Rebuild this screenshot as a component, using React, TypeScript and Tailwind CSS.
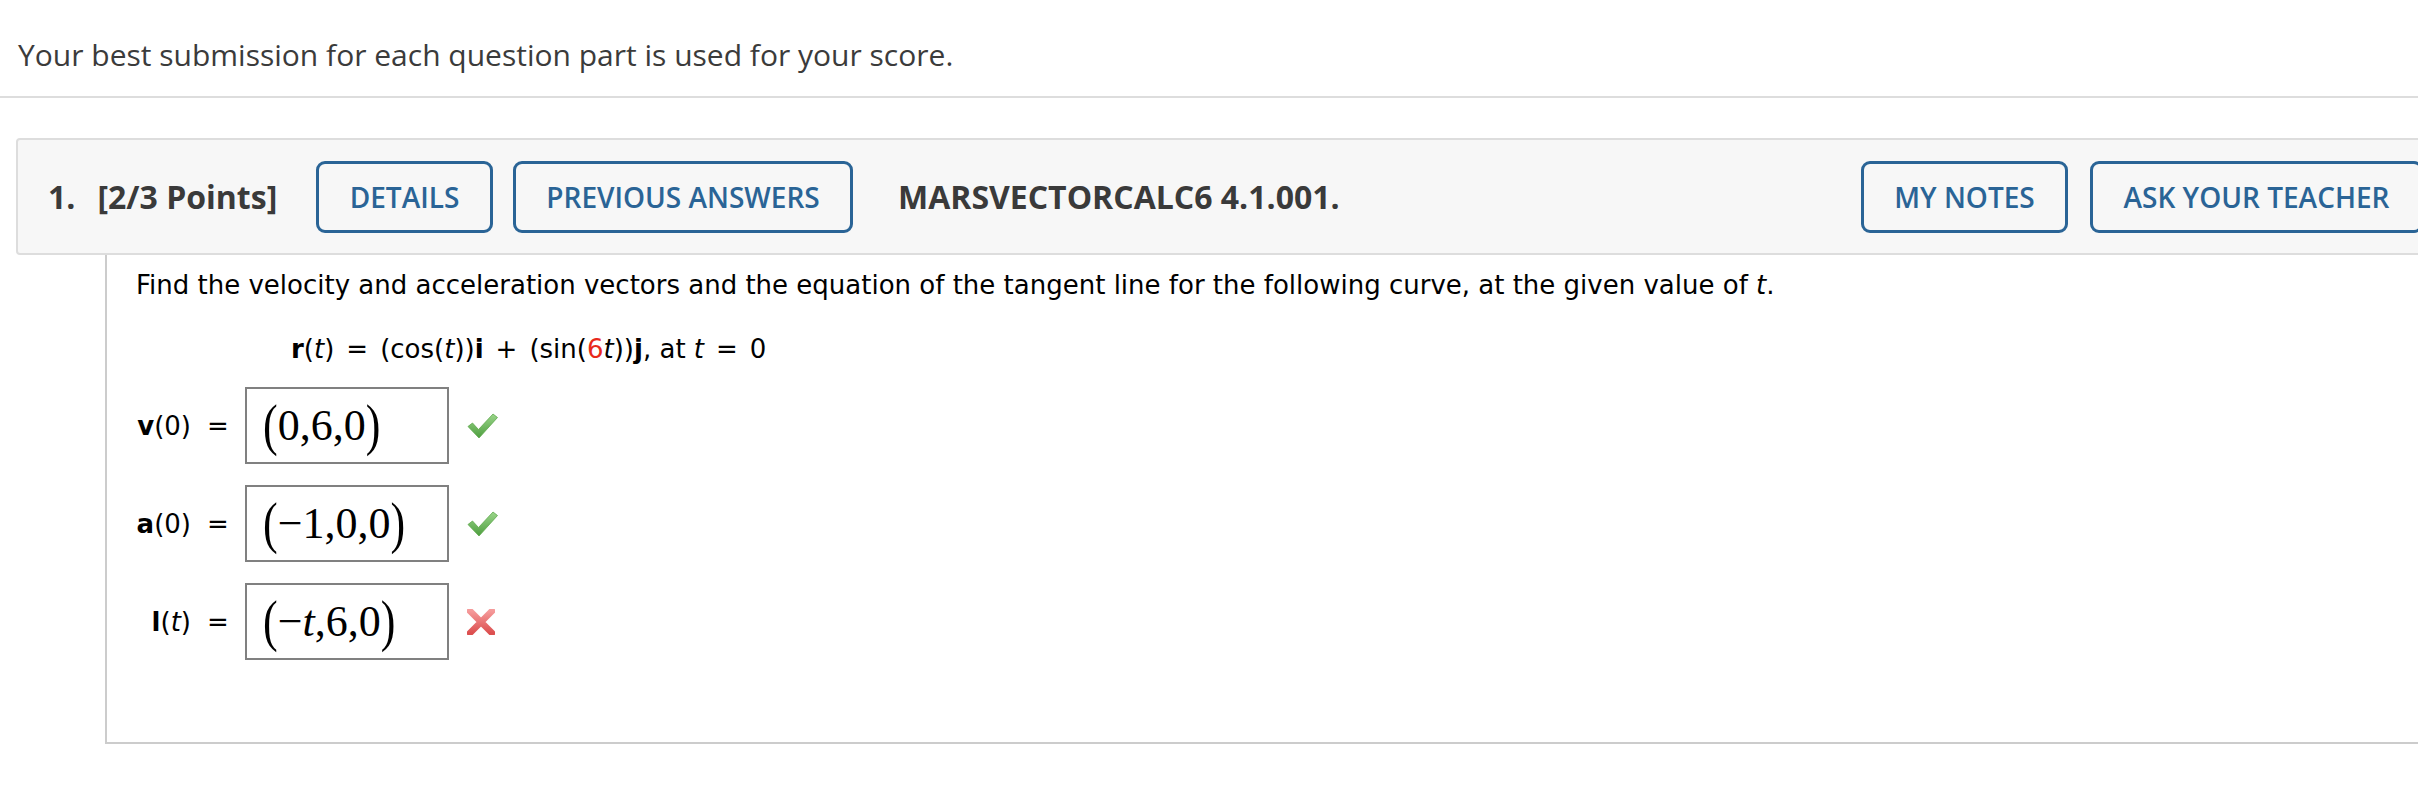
import React from "react";

const Check = () => (
  <svg width="31" height="26" viewBox="0 0 31 26" className="block">
    <defs>
      <linearGradient id="cg" x1="0" y1="0" x2="0" y2="1">
        <stop offset="0" stopColor="#9ad58a" />
        <stop offset="1" stopColor="#4e9e3f" />
      </linearGradient>
    </defs>
    <path d="M1 13.5 L5.5 10 L11.5 16.5 L26 1 L30.5 4.5 L12 25 Z" fill="url(#cg)" stroke="#5ea84d" strokeWidth="0.8" strokeLinejoin="round" />
  </svg>
);

const Cross = () => (
  <svg width="28" height="26" viewBox="0 0 28 26" className="block">
    <defs>
      <linearGradient id="xg" x1="0" y1="0" x2="0" y2="1">
        <stop offset="0" stopColor="#f59a9a" />
        <stop offset="1" stopColor="#dc4f4f" />
      </linearGradient>
    </defs>
    <path d="M3 2 L25 24 M25 2 L3 24" stroke="url(#xg)" strokeWidth="6.5" strokeLinecap="round" fill="none" />
  </svg>
);

const Paren = ({ c }: { c: string }) => (
  <span className="inline-block scale-y-[1.3] origin-center">{c}</span>
);

const Op = ({ c }: { c: string }) => <span className="mx-[12px]">{c}</span>;

const Row = ({ label, math, ok }: { label: React.ReactNode; math: React.ReactNode; ok: boolean }) => (
  <div className="flex items-center h-[77px]">
    <span className="w-[55px] text-right whitespace-nowrap">{label}</span>
    <span className="w-[54px] text-center">=</span>
    <div className="w-[204px] h-[77px] border-2 border-[#808080] flex items-center pl-[16px] bg-white">
      <span className="text-[44px] leading-none text-black whitespace-nowrap" style={{ fontFamily: '"Liberation Serif", "Times New Roman", serif' }}>
        {math}
      </span>
    </div>
    <div className="ml-[18px]">{ok ? <Check /> : <Cross />}</div>
  </div>
);

const Btn = ({ w, children }: { w: string; children: React.ReactNode }) => (
  <div className={`${w} h-[72px] border-[3px] border-[#2a6496] rounded-[9px] flex items-center justify-center text-[28px] font-semibold text-[#2a6496] whitespace-nowrap`}>
    {children}
  </div>
);

export default function App() {
  return (
    <div className="w-[2418px] h-[794px] overflow-hidden bg-white">
      <div className="w-[2470px]" style={{ fontFamily: '"Open Sans", "Noto Sans", sans-serif' }}>
        <div className="h-[96px] pt-[35px] pl-[18px] text-[30px] leading-[40px] text-[#3b3b3b]">
          Your best submission for each question part is used for your score.
        </div>
        <div className="border-t-2 border-[#dddddd]" />
        <div className="mt-[40px] ml-[16px] w-[2440px] h-[117px] border-2 border-[#dddddd] rounded-[4px] bg-[#f7f7f7] flex items-center pl-[30px] pr-[31px]">
          <div className="w-[268px] text-[32px] font-bold text-[#3a3a3a] whitespace-nowrap">
            <span>1.</span>
            <span className="ml-[22px]">[2/3 Points]</span>
          </div>
          <Btn w="w-[177px]">DETAILS</Btn>
          <div className="ml-[20px]">
            <Btn w="w-[340px]">PREVIOUS ANSWERS</Btn>
          </div>
          <div className="ml-[45px] text-[32px] font-bold text-[#3a3a3a] whitespace-nowrap">MARSVECTORCALC6 4.1.001.</div>
          <div className="ml-auto flex gap-[22px]">
            <Btn w="w-[207px]">MY NOTES</Btn>
            <Btn w="w-[333px]">ASK YOUR TEACHER</Btn>
          </div>
        </div>
        <div
          className="ml-[105px] h-[489px] border-l-2 border-b-2 border-[#cccccc] pl-[29px] pt-[12px] text-[26px] leading-[36px] text-black"
          style={{ fontFamily: '"DejaVu Sans", Verdana, sans-serif' }}
        >
          <div className="whitespace-nowrap">
            Find the velocity and acceleration vectors and the equation of the tangent line for the following curve, at the given value of <i>t</i>.
          </div>
          <div className="mt-[28px] pl-[155px] whitespace-nowrap">
            <b>r</b>(<i>t</i>)<Op c="=" />(cos(<i>t</i>))<b>i</b><Op c="+" />(sin(<span className="text-[#e8291c]">6</span><i>t</i>))<b>j</b>, at <i>t</i><Op c="=" />0
          </div>
          <div className="mt-[20px] flex flex-col gap-[21px]">
            <Row
              label={<><b>v</b>(0)</>}
              ok
              math={<><Paren c="(" />0,6,0<Paren c=")" /></>}
            />
            <Row
              label={<><b>a</b>(0)</>}
              ok
              math={<><Paren c="(" />−1,0,0<Paren c=")" /></>}
            />
            <Row
              label={<><b>l</b>(<i>t</i>)</>}
              ok={false}
              math={<><Paren c="(" />−<i>t</i>,6,0<Paren c=")" /></>}
            />
          </div>
        </div>
      </div>
    </div>
  );
}
